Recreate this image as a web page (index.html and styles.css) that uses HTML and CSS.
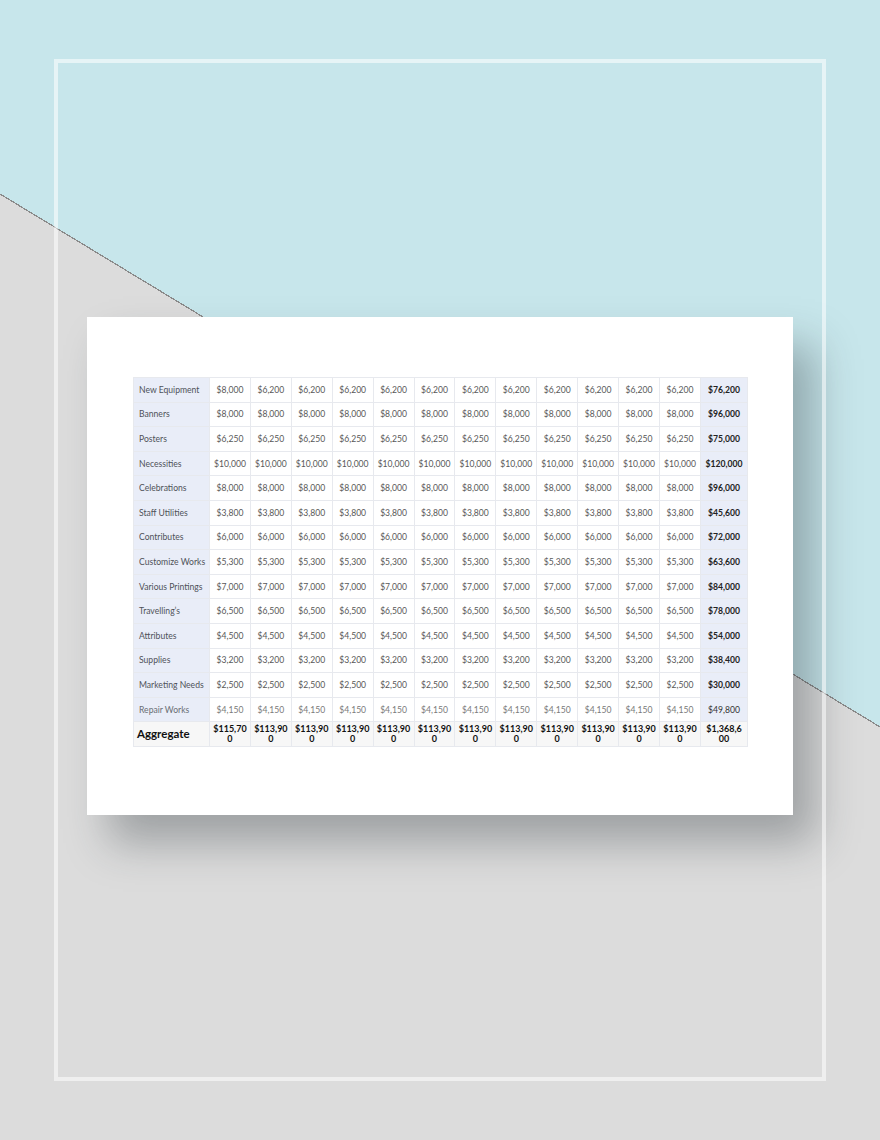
FILE: index.html
```html
<!DOCTYPE html>
<html>
<head>
<meta charset="utf-8">
<link rel="stylesheet" href="styles.css">
</head>
<body>
<div class="stage">
  <div class="sheet">
    <table class="budget">
      <colgroup>
        <col class="c-label"><col><col><col><col><col><col><col><col><col><col><col><col><col class="c-total">
      </colgroup>
      <tbody>
        <tr><td class="lbl">New Equipment</td><td>$8,000</td><td>$6,200</td><td>$6,200</td><td>$6,200</td><td>$6,200</td><td>$6,200</td><td>$6,200</td><td>$6,200</td><td>$6,200</td><td>$6,200</td><td>$6,200</td><td>$6,200</td><td class="tot">$76,200</td></tr>
        <tr><td class="lbl">Banners</td><td>$8,000</td><td>$8,000</td><td>$8,000</td><td>$8,000</td><td>$8,000</td><td>$8,000</td><td>$8,000</td><td>$8,000</td><td>$8,000</td><td>$8,000</td><td>$8,000</td><td>$8,000</td><td class="tot">$96,000</td></tr>
        <tr><td class="lbl">Posters</td><td>$6,250</td><td>$6,250</td><td>$6,250</td><td>$6,250</td><td>$6,250</td><td>$6,250</td><td>$6,250</td><td>$6,250</td><td>$6,250</td><td>$6,250</td><td>$6,250</td><td>$6,250</td><td class="tot">$75,000</td></tr>
        <tr><td class="lbl">Necessities</td><td>$10,000</td><td>$10,000</td><td>$10,000</td><td>$10,000</td><td>$10,000</td><td>$10,000</td><td>$10,000</td><td>$10,000</td><td>$10,000</td><td>$10,000</td><td>$10,000</td><td>$10,000</td><td class="tot">$120,000</td></tr>
        <tr><td class="lbl">Celebrations</td><td>$8,000</td><td>$8,000</td><td>$8,000</td><td>$8,000</td><td>$8,000</td><td>$8,000</td><td>$8,000</td><td>$8,000</td><td>$8,000</td><td>$8,000</td><td>$8,000</td><td>$8,000</td><td class="tot">$96,000</td></tr>
        <tr><td class="lbl">Staff Utilities</td><td>$3,800</td><td>$3,800</td><td>$3,800</td><td>$3,800</td><td>$3,800</td><td>$3,800</td><td>$3,800</td><td>$3,800</td><td>$3,800</td><td>$3,800</td><td>$3,800</td><td>$3,800</td><td class="tot">$45,600</td></tr>
        <tr><td class="lbl">Contributes</td><td>$6,000</td><td>$6,000</td><td>$6,000</td><td>$6,000</td><td>$6,000</td><td>$6,000</td><td>$6,000</td><td>$6,000</td><td>$6,000</td><td>$6,000</td><td>$6,000</td><td>$6,000</td><td class="tot">$72,000</td></tr>
        <tr><td class="lbl">Customize Works</td><td>$5,300</td><td>$5,300</td><td>$5,300</td><td>$5,300</td><td>$5,300</td><td>$5,300</td><td>$5,300</td><td>$5,300</td><td>$5,300</td><td>$5,300</td><td>$5,300</td><td>$5,300</td><td class="tot">$63,600</td></tr>
        <tr><td class="lbl">Various Printings</td><td>$7,000</td><td>$7,000</td><td>$7,000</td><td>$7,000</td><td>$7,000</td><td>$7,000</td><td>$7,000</td><td>$7,000</td><td>$7,000</td><td>$7,000</td><td>$7,000</td><td>$7,000</td><td class="tot">$84,000</td></tr>
        <tr><td class="lbl">Travelling’s</td><td>$6,500</td><td>$6,500</td><td>$6,500</td><td>$6,500</td><td>$6,500</td><td>$6,500</td><td>$6,500</td><td>$6,500</td><td>$6,500</td><td>$6,500</td><td>$6,500</td><td>$6,500</td><td class="tot">$78,000</td></tr>
        <tr><td class="lbl">Attributes</td><td>$4,500</td><td>$4,500</td><td>$4,500</td><td>$4,500</td><td>$4,500</td><td>$4,500</td><td>$4,500</td><td>$4,500</td><td>$4,500</td><td>$4,500</td><td>$4,500</td><td>$4,500</td><td class="tot">$54,000</td></tr>
        <tr><td class="lbl">Supplies</td><td>$3,200</td><td>$3,200</td><td>$3,200</td><td>$3,200</td><td>$3,200</td><td>$3,200</td><td>$3,200</td><td>$3,200</td><td>$3,200</td><td>$3,200</td><td>$3,200</td><td>$3,200</td><td class="tot">$38,400</td></tr>
        <tr><td class="lbl">Marketing Needs</td><td>$2,500</td><td>$2,500</td><td>$2,500</td><td>$2,500</td><td>$2,500</td><td>$2,500</td><td>$2,500</td><td>$2,500</td><td>$2,500</td><td>$2,500</td><td>$2,500</td><td>$2,500</td><td class="tot">$30,000</td></tr>
        <tr class="light"><td class="lbl">Repair Works</td><td>$4,150</td><td>$4,150</td><td>$4,150</td><td>$4,150</td><td>$4,150</td><td>$4,150</td><td>$4,150</td><td>$4,150</td><td>$4,150</td><td>$4,150</td><td>$4,150</td><td>$4,150</td><td class="tot">$49,800</td></tr>
        <tr class="agg"><td class="lbl">Aggregate</td><td>$115,700</td><td>$113,900</td><td>$113,900</td><td>$113,900</td><td>$113,900</td><td>$113,900</td><td>$113,900</td><td>$113,900</td><td>$113,900</td><td>$113,900</td><td>$113,900</td><td>$113,900</td><td>$1,368,600</td></tr>
      </tbody>
    </table>
  </div>
  <div class="frame"></div>
</div>
</body>
</html>
```

FILE: styles.css
```css
html, body {
  margin: 0;
  padding: 0;
}

body {
  width: 880px;
  height: 1140px;
  overflow: hidden;
  font-family: "Lato", "Open Sans", sans-serif;
}

.stage {
  position: relative;
  width: 880px;
  height: 1140px;
  overflow: hidden;
  display: flow-root;
  background: linear-gradient(211.2deg,
    #c7e6eb 0px,
    #c7e6eb 621.2px,
    #8a8a8a 621.2px,
    #8a8a8a 622.4px,
    #dcdcdc 622.4px,
    #dcdcdc 100%);
}

.sheet {
  width: 706px;
  height: 498px;
  margin: 317px 0 0 87px;
  padding: 60px 0 0 46px;
  box-sizing: border-box;
  background: #ffffff;
  box-shadow: 22px 28px 40px rgba(40, 50, 55, 0.34);
}

.frame {
  position: absolute;
  left: 54px;
  top: 59px;
  width: 772px;
  height: 1022px;
  box-sizing: border-box;
  border: 4px solid rgba(255, 255, 255, 0.55);
  pointer-events: none;
}

.budget {
  width: 615px;
  border-collapse: collapse;
  table-layout: fixed;
  font-size: 8.6px;
  color: #585858;
}

.budget col.c-label {
  width: 76px;
}

.budget col.c-total {
  width: 47px;
}

.budget td {
  height: 23.6px;
  padding: 0;
  border: 1px solid #e7e9ee;
  text-align: center;
  vertical-align: middle;
  white-space: nowrap;
  background: #ffffff;
}

.budget td.lbl {
  text-align: left;
  padding-left: 5px;
  background: #e9edf8;
  color: #4f5258;
}

.budget td.tot {
  background: #e9edf8;
  color: #222222;
  font-weight: 700;
}

.budget tr.light td {
  color: #7a7a7a;
}

.budget tr.light td.lbl {
  color: #6a6d74;
}

.budget tr.light td.tot {
  color: #333333;
  font-weight: 400;
}

.budget tr.agg td {
  height: 24px;
  padding: 0 3px;
  background: #f7f7f7;
  color: #111111;
  font-weight: 700;
  font-size: 9px;
  line-height: 10.5px;
  white-space: normal;
  word-break: break-all;
}

.budget tr.agg td.lbl {
  font-size: 11.5px;
  padding-left: 3px;
  background: #f7f7f7;
  color: #111111;
  word-break: normal;
}
```
